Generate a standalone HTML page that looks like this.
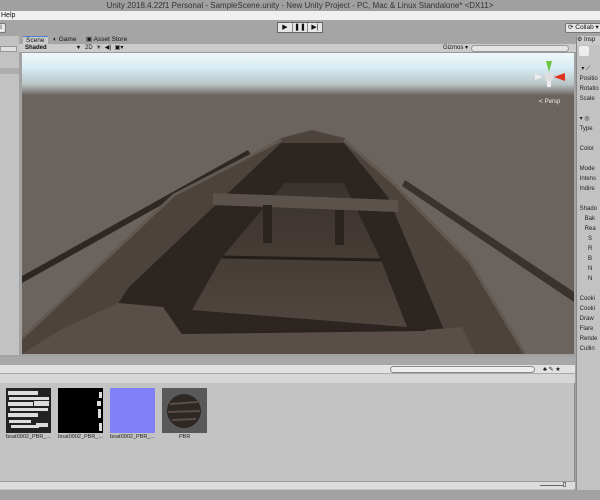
<!DOCTYPE html>
<html><head><meta charset="utf-8"><style>
*{margin:0;padding:0;box-sizing:border-box}
body{width:600px;height:500px;overflow:hidden;background:#a2a2a2;font-family:"Liberation Sans",sans-serif;font-size:7px;color:#111;position:relative}
.a{position:absolute}
</style></head><body>
<div class="a" style="left:0;top:0;width:600px;height:11px;background:#a0a0a0;color:#333;font-size:8px;text-align:center;line-height:11px">Unity 2018.4.22f1 Personal - SampleScene.unity - New Unity Project - PC, Mac &amp; Linux Standalone* &lt;DX11&gt;</div>
<div class="a" style="left:0;top:11px;width:600px;height:9px;background:#f0f0f0;line-height:9px;font-size:7px;padding-left:1px">Help</div>
<div class="a" style="left:0;top:20px;width:600px;height:16px;background:#a5a5a5"></div>
<div class="a" style="left:-4px;top:23px;width:10px;height:10px;background:#e8e8e8;border:1px solid #777;border-radius:2px;font-size:6px;line-height:8px">al</div>
<div class="a" style="left:277px;top:22px;width:46px;height:11px;background:#e6e6e6;border:1px solid #666;font-size:7px;line-height:9px;display:flex">
<span style="flex:1;text-align:center;border-right:1px solid #888">▶</span><span style="flex:1;text-align:center;border-right:1px solid #888">❚❚</span><span style="flex:1;text-align:center">▶|</span></div>
<div class="a" style="left:565px;top:23px;width:40px;height:10px;background:#e6e6e6;border:1px solid #777;border-radius:2px;font-size:6.5px;line-height:8px;padding-left:2px">⟳ Collab ▾</div>
<!-- left panel -->
<div class="a" style="left:0;top:36px;width:19px;height:319px;background:#c2c2c2"></div>
<div class="a" style="left:0;top:46px;width:17px;height:6px;background:#e0e0e0;border:1px solid #999"></div>
<div class="a" style="left:0;top:68px;width:19px;height:6px;background:#adadad"></div>
<!-- tabs -->
<div class="a" style="left:19px;top:36px;width:557px;height:8px;background:#a5a5a5"></div>
<div class="a" style="left:23px;top:36px;width:25px;height:9px;background:#cbcbcb;border-top:1px solid #4a7fd0;font-size:6.5px;line-height:8px;padding-left:3px">Scene</div>
<div class="a" style="left:53px;top:36px;font-size:6.5px;line-height:8px">◐ Game</div>
<div class="a" style="left:86px;top:36px;font-size:6.5px;line-height:8px">▣ Asset Store</div>
<div class="a" style="left:19px;top:44px;width:557px;height:9px;background:#cbcbcb;border-bottom:1px solid #999"></div>
<div class="a" style="left:25px;top:44px;width:55px;font-size:6px;line-height:8px;font-weight:bold">Shaded<span style="float:right">▾</span></div>
<div class="a" style="left:85px;top:44px;font-size:6px;line-height:8px">2D &nbsp;☀ &nbsp;◀) &nbsp;▣▾</div>
<div class="a" style="left:443px;top:44px;font-size:6px;line-height:8px">Gizmos ▾</div>
<div class="a" style="left:471px;top:45px;width:98px;height:7px;background:#e4e4e4;border:1px solid #999;border-radius:4px"></div>
<!-- scene -->
<svg class="a" style="left:22px;top:53px" width="552" height="301" viewBox="22 53 552 301">
<defs>
<linearGradient id="sky" x1="0" y1="0" x2="0" y2="1"><stop offset="0" stop-color="#eef7f8"/><stop offset=".35" stop-color="#d8eef5"/><stop offset=".75" stop-color="#b8c3c4"/><stop offset="1" stop-color="#706862"/></linearGradient>
<linearGradient id="fl" x1="0" y1="0" x2="0" y2="1"><stop offset="0" stop-color="#3a322d"/><stop offset="1" stop-color="#51463f"/></linearGradient>
</defs>
<rect x="22" y="53" width="552" height="42" fill="url(#sky)"/>
<rect x="22" y="95" width="552" height="259" fill="#6b635d"/>
<!-- left oar -->
<polygon points="22,276 248,150 251,155 22,283" fill="#2e2824"/>
<!-- hull outer -->
<polygon points="281,138 312,130 344,138 392,180 470,260 525,354 22,354 22,340 174,197" fill="#4c433d"/>
<!-- right oar over hull -->
<polygon points="405,180 574,292 574,302 402,186" fill="#3a322c"/>
<!-- inner walls -->
<polygon points="281,143 344,143 388,197 444,330 462,354 85,354 129,287" fill="#2c2521"/>
<!-- floor -->
<polygon points="285,183 344,183 381,260 407,327 192,310 222,257" fill="url(#fl)"/>
<line x1="222" y1="257" x2="381" y2="260" stroke="#241e1b" stroke-width="3"/>
<!-- bench -->
<polygon points="213,193 398,200 398,212 213,205" fill="#5b524b"/>
<rect x="263" y="205" width="9" height="38" fill="#2a2320"/>
<rect x="335" y="210" width="9" height="35" fill="#2a2320"/>
<!-- rear seat -->
<polygon points="22,354 60,330 118,303 163,307 181,333 425,330 462,327 475,354" fill="#594f48"/>
<line x1="181" y1="333" x2="425" y2="330" stroke="#2a2320" stroke-width="2"/>
<!-- rails -->
<polyline points="22,338 174,195 281,140" fill="none" stroke="#625952" stroke-width="3"/>
<polyline points="344,140 392,182 470,262 525,354" fill="none" stroke="#625952" stroke-width="3"/>
<!-- gizmo -->
<polygon points="546,61 552,61 549,72" fill="#6ec43a"/>
<polygon points="554,77 565,73 565,81" fill="#e0301e"/>
<polygon points="543,77 535,74 535,80" fill="#eee"/>
<rect x="545" y="73" width="8" height="8" fill="#ddd"/>
<rect x="547" y="81" width="4" height="6" fill="#eee"/>
<text x="538" y="103" font-size="6" fill="#eee" font-family="Liberation Sans">≺ Persp</text>
</svg>
<!-- inspector -->
<div class="a" style="left:576px;top:36px;width:24px;height:454px;background:#c2c2c2;border-left:1px solid #888"></div>
<div class="a" style="left:577px;top:36px;width:23px;height:9px;background:#cbcbcb;font-size:6px;line-height:8px">⚙ Insp</div>
<div class="a" style="left:579px;top:46px;width:10px;height:10px;background:#eee;border-radius:2px"></div>
<div class="a" style="left:578px;top:64px;font-size:6px;line-height:10px;color:#222;white-space:pre">  ▾ ⟋
 Positio
 Rotatio
 Scale

 ▾ ◎
 Type

 Color

 Mode
 Intens
 Indire

 Shado
    Bak
    Rea
      S
      R
      B
      N
      N

 Cooki
 Cooki
 Draw
 Flare
 Rende
 Cullin</div>
<!-- project -->
<div class="a" style="left:0;top:357px;width:575px;height:133px;background:#c3c3c3;border-right:1px solid #888"></div>
<div class="a" style="left:0;top:357px;width:575px;height:8px;background:#a8a8a8"></div>
<div class="a" style="left:0;top:365px;width:575px;height:9px;background:#e2e2e2;border-bottom:1px solid #aaa"></div>
<div class="a" style="left:390px;top:366px;width:145px;height:7px;background:#eee;border:1px solid #888;border-radius:4px"></div>
<div class="a" style="left:543px;top:366px;font-size:6px">♣ ✎ ★</div>
<div class="a" style="left:0;top:374px;width:575px;height:9px;background:#d6d6d6"></div>
<svg class="a" style="left:6px;top:388px" width="45" height="45"><rect width="45" height="45" fill="#222"/>
<g fill="#ddd"><rect x="2" y="3" width="30" height="4"/><rect x="3" y="9" width="40" height="3"/><rect x="2" y="14" width="25" height="4"/><rect x="28" y="13" width="15" height="5"/><rect x="4" y="20" width="38" height="3"/><rect x="2" y="25" width="30" height="4"/><rect x="3" y="32" width="22" height="3"/><rect x="5" y="37" width="28" height="3"/><rect x="30" y="35" width="12" height="4"/></g></svg>
<svg class="a" style="left:58px;top:388px" width="45" height="45"><rect width="45" height="45" fill="#000"/><g fill="#ddd"><rect x="41" y="4" width="3" height="6"/><rect x="39" y="13" width="4" height="5"/><rect x="40" y="21" width="3" height="9"/><rect x="41" y="35" width="3" height="8"/></g></svg>
<div class="a" style="left:110px;top:388px;width:45px;height:45px;background:#8080f8"></div>
<svg class="a" style="left:162px;top:388px" width="45" height="45"><rect width="45" height="45" fill="#595959"/><ellipse cx="22" cy="23" rx="17" ry="17" fill="#2e2824"/><g stroke="#5a4d44" stroke-width="2"><line x1="8" y1="16" x2="36" y2="14"/><line x1="6" y1="24" x2="38" y2="23"/><line x1="10" y1="32" x2="34" y2="31"/></g></svg>
<div class="a" style="top:434px;left:6px;font-size:5.5px;color:#222">boat0902_PBR_...</div>
<div class="a" style="top:434px;left:58px;font-size:5.5px;color:#222">boat0902_PBR_...</div>
<div class="a" style="top:434px;left:110px;font-size:5.5px;color:#222">boat0902_PBR_...</div>
<div class="a" style="top:434px;left:179px;font-size:5.5px;color:#222">PBR</div>
<div class="a" style="left:0;top:481px;width:575px;height:8px;background:#dcdcdc;border-top:1px solid #999"></div>
<div class="a" style="left:540px;top:485px;width:25px;height:1px;background:#666"></div>
<div class="a" style="left:563px;top:482px;width:3px;height:5px;background:#eee;border:1px solid #777"></div>
</body></html>
